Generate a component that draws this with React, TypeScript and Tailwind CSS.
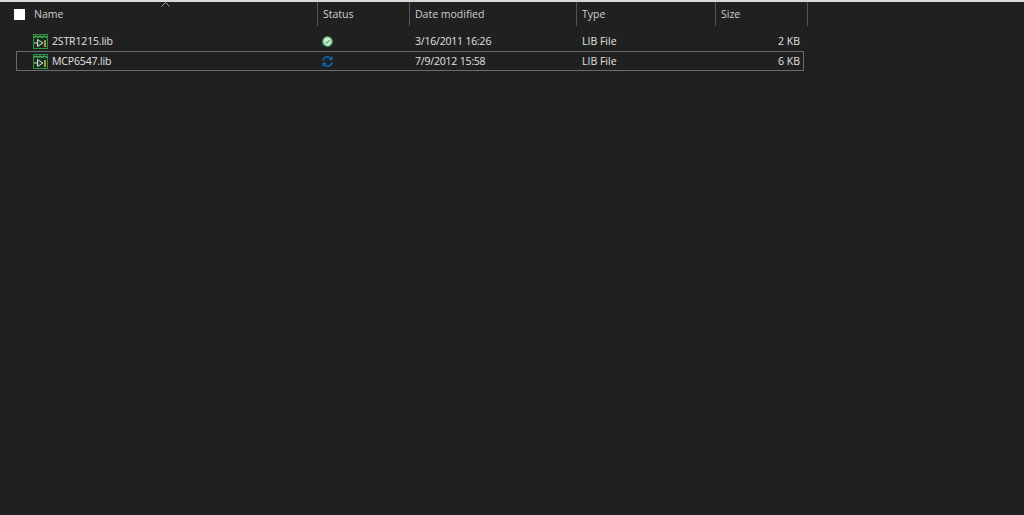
const FONT = "font-['Open_Sans','Noto_Sans',sans-serif]";

function LibIcon() {
  return (
    <svg width="15" height="15" viewBox="0 0 15 15" className="shrink-0">
      <rect x="0.5" y="0.5" width="14" height="14" fill="#14301c" stroke="#2f8f45" />
      <path d="M1 3.5 L3 2 L5 3.5 L7 2 L9 3.5 L11 2 L14 3.5" fill="none" stroke="#4fbb66" strokeWidth="1.2" />
      <path d="M4.5 5.5 V12.5 L10 9 Z" fill="#25452f" stroke="#cfdad3" strokeWidth="1" />
      <path d="M1 9 H4.5" stroke="#cfdad3" strokeWidth="1" />
      <rect x="11" y="6" width="2" height="7" fill="#b98f42" />
    </svg>
  );
}

function SyncedIcon() {
  return (
    <svg width="11" height="11" viewBox="0 0 11 11">
      <circle cx="5.5" cy="5.5" r="4.8" fill="#d7e8da" stroke="#2f9b4c" strokeWidth="1.3" />
      <path d="M3.3 5.6 L4.9 7.1 L7.7 4.1" fill="none" stroke="#55ad6c" strokeWidth="1.3" />
    </svg>
  );
}

function SyncIcon() {
  return (
    <svg width="11" height="11" viewBox="0 0 11 11" fill="none" stroke="#0a67b5" strokeWidth="1.5">
      <path d="M1 4.5 A4.3 4.3 0 0 1 9 3" />
      <path d="M10 6 A4.3 4.3 0 0 1 2 8" />
      <path d="M9.8 0.6 V3.5 H7" />
      <path d="M1.2 10.4 V7.5 H4" />
    </svg>
  );
}

const HEADERS = [
  { label: "Status", width: "w-[92px]" },
  { label: "Date modified", width: "w-[167px]" },
  { label: "Type", width: "w-[139px]" },
  { label: "Size", width: "w-[92px]" },
];

function Row({
  name,
  status,
  date,
  size,
  selected,
}: {
  name: string;
  status: React.ReactNode;
  date: string;
  size: string;
  selected?: boolean;
}) {
  return (
    <div
      className={`ml-4 flex w-[788px] items-center border ${
        selected ? "h-5 border-[#6b6b6b] pt-px" : "h-[19px] border-transparent"
      }`}
    >
      <div className="flex w-[300px] items-center gap-1 pl-4">
        <LibIcon />
        <span className="tracking-[-0.15px]">{name}</span>
      </div>
      <div className="flex w-[92px] items-center pl-[5px]">{status}</div>
      <div className="w-[167px] pl-[6px] tracking-[-0.2px]">{date}</div>
      <div className="w-[139px] pl-[6px]">LIB File</div>
      <div className="w-[85px] text-right">{size}</div>
    </div>
  );
}

export default function App() {
  return (
    <div className={`${FONT} h-[515px] w-[1024px] overflow-hidden bg-[#202020] text-[10.5px] text-[#e2e2e2]`}>
      <div className="h-[2px] bg-[#d9d9d9]" />
      <div className="relative flex h-[24px] items-stretch text-[#cfcfcf]">
        <div className="flex w-[317px] items-center pt-[2px]">
          <div className="mb-[2px] ml-[14px] h-[11px] w-[11px] bg-white" />
          <span className="ml-[9px]">Name</span>
        </div>
        {HEADERS.map((h) => (
          <div key={h.label} className={`${h.width} flex items-center border-l border-[#555555] pl-[5px] pt-[2px]`}>
            {h.label}
          </div>
        ))}
        <div className="border-l border-[#555555]" />
        <svg width="9" height="5" viewBox="0 0 9 5" className="absolute left-[161px] top-0" fill="none" stroke="#a0a0a0">
          <path d="M0.5 4.5 L4.5 0.5 L8.5 4.5" />
        </svg>
      </div>
      <div className="mt-[6px] flex flex-col">
        <Row name="2STR1215.lib" status={<SyncedIcon />} date="3/16/2011 16:26" size="2 KB" />
        <Row name="MCP6547.lib" status={<SyncIcon />} date="7/9/2012 15:58" size="6 KB" selected />
      </div>
    </div>
  );
}
